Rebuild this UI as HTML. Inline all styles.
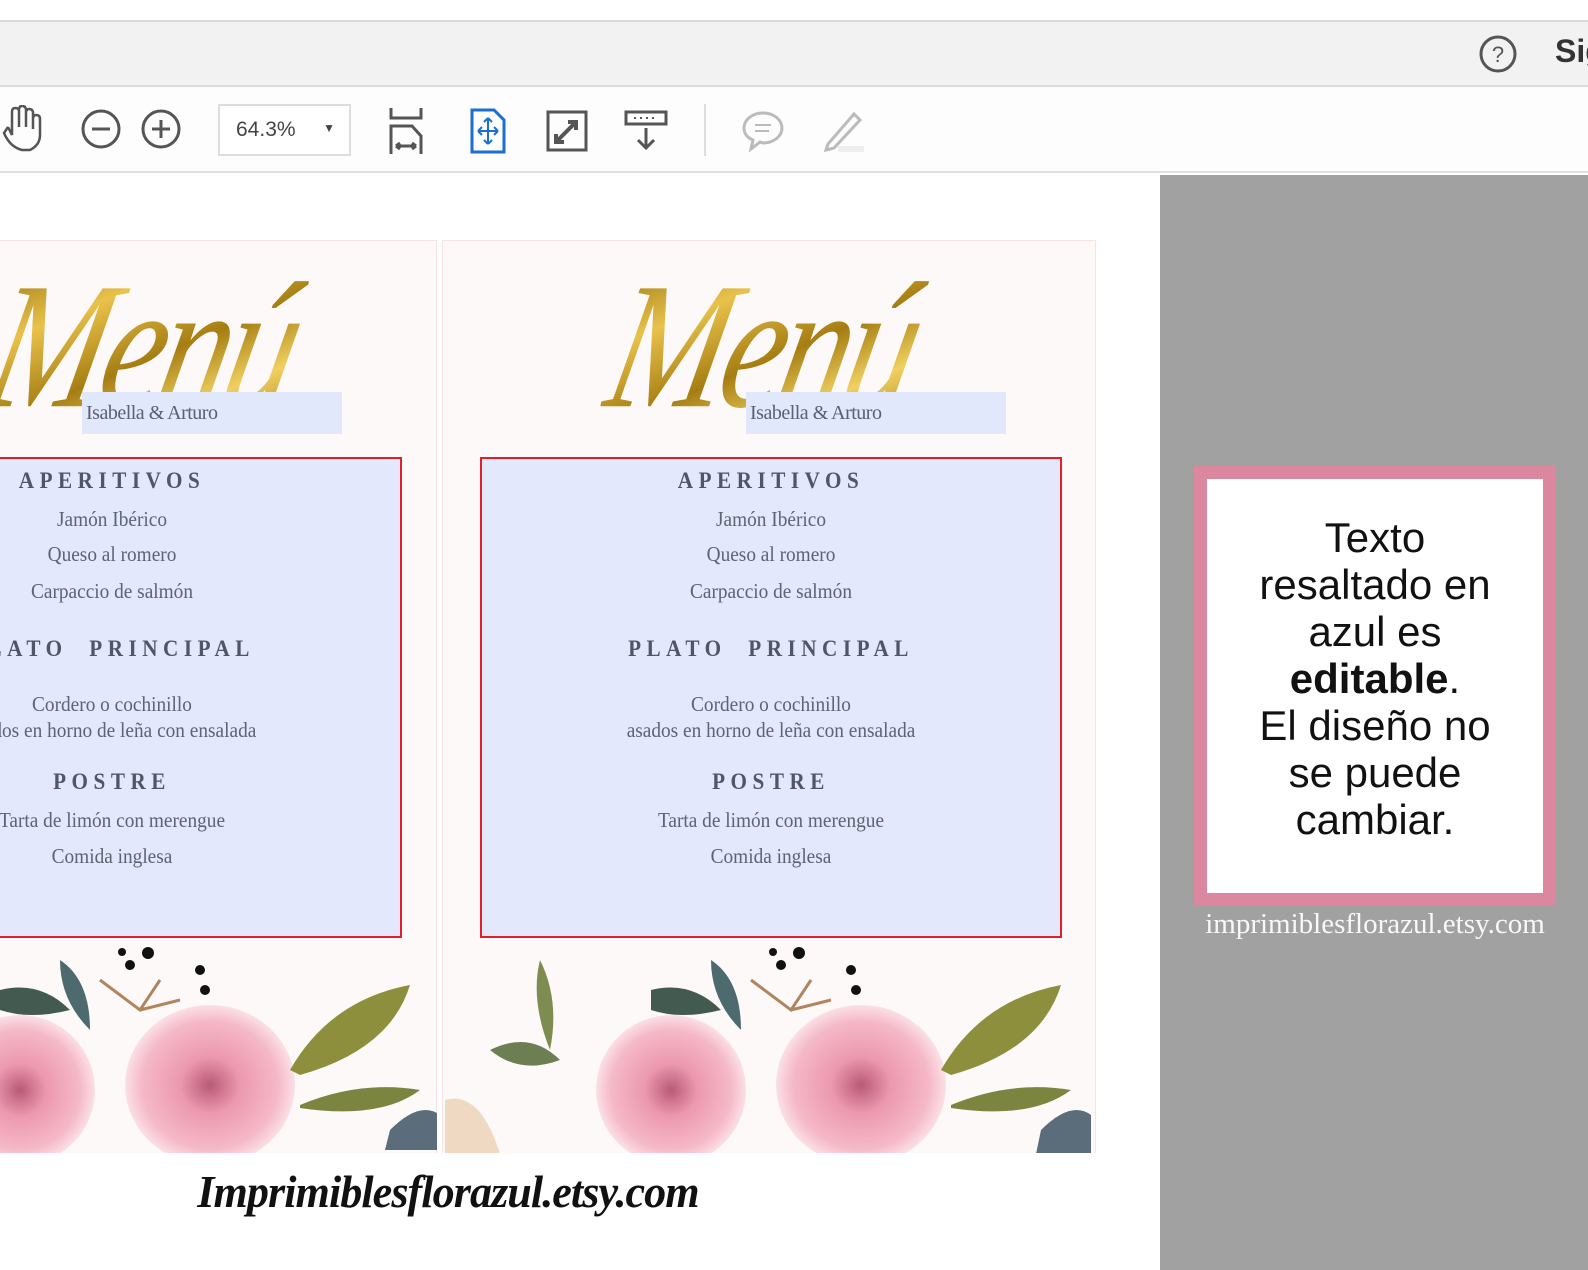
<!DOCTYPE html>
<html><head><meta charset="utf-8"><style>
*{margin:0;padding:0;box-sizing:border-box}
body{width:1588px;height:1270px;overflow:hidden;background:#fff;position:relative;font-family:"Liberation Sans",sans-serif}
.abs{position:absolute}
.page{position:absolute;top:240px;height:914px;background:#fdf9f9;border:1px solid #f7e3e6;overflow:hidden}
.menu{position:absolute;font-family:"Liberation Serif",serif;font-style:italic;font-size:150px;color:#c99a1e;background:linear-gradient(160deg,#8a6508,#e8c24a 30%,#a57d12 55%,#f0d060 75%,#9a700c);-webkit-background-clip:text;background-clip:text;-webkit-text-fill-color:transparent;letter-spacing:-6px;transform:skewX(-12deg) scale(0.95,1.2);transform-origin:left top}
.names{position:absolute;top:392px;height:42px;width:260px;background:#e2e8fb;font-family:"Liberation Serif",serif;font-size:20px;color:#5b6070;padding:10px 4px 0;letter-spacing:-0.5px;z-index:2}
.box{position:absolute;top:457px;height:481px;border:2px solid #e0202a;background:#e3e8fc}
.t{position:absolute;font-family:"Liberation Serif",serif;color:#5c6474;text-align:center;width:600px;white-space:nowrap;transform:scaleX(0.92)}
.h{font-weight:bold;font-size:23px;letter-spacing:6px;color:#4f5666}
.i{font-size:21px}
</style></head><body>
<div class="abs" style="left:0;top:0;width:1588px;height:20px;background:#fff"></div>
<div class="abs" style="left:0;top:20px;width:1588px;height:67px;background:#f2f2f2;border-top:2px solid #dcdcdc;border-bottom:2px solid #dcdcdc"></div>
<svg class="abs" style="left:1478px;top:34px" width="40" height="40" viewBox="0 0 40 40"><circle cx="20" cy="20" r="17" fill="none" stroke="#555" stroke-width="3"/><text x="20" y="28" text-anchor="middle" font-size="22" font-family="Liberation Sans" fill="#555">?</text></svg>
<div class="abs" style="left:1555px;top:33px;font-size:32px;color:#333;font-weight:bold">Sig</div>
<div class="abs" style="left:0;top:87px;width:1588px;height:86px;background:#fdfdfd;border-bottom:2px solid #e0e0e0"></div>
<svg class="abs" style="left:0;top:105px" width="50" height="50" viewBox="0 0 50 50" fill="none" stroke="#555" stroke-width="2.5"><path d="M8 22 L4 28 Q10 42 22 45 L30 45 Q40 40 40 30 L40 14 Q40 10 36 10 Q33 10 33 14 L33 24 M33 14 L33 8 Q33 4 29 4 Q26 4 26 8 L26 22 M26 8 L26 5 Q26 1 22 1 Q19 1 19 5 L19 22 M19 6 Q19 3 15 3 Q12 3 12 7 L12 30 L8 22"/></svg>
<svg class="abs" style="left:80px;top:108px" width="42" height="42"><circle cx="21" cy="21" r="18" fill="none" stroke="#555" stroke-width="3"/><path d="M12 21H30" stroke="#555" stroke-width="3"/></svg>
<svg class="abs" style="left:140px;top:108px" width="42" height="42"><circle cx="21" cy="21" r="18" fill="none" stroke="#555" stroke-width="3"/><path d="M12 21H30M21 12V30" stroke="#555" stroke-width="3"/></svg>
<div class="abs" style="left:218px;top:104px;width:133px;height:52px;border:2px solid #ddd;background:#fff;font-size:21px;color:#444;padding:12px 16px">64.3%<span style="position:absolute;right:14px;top:15px;font-size:12px">▼</span></div>
<svg class="abs" style="left:388px;top:106px" width="40" height="50" fill="none" stroke="#555" stroke-width="3"><path d="M3 2V12H33V2M3 48V20H24L33 30V48M8 40H28M8 40l4-3M8 40l4 3M28 40l-4-3M28 40l-4 3"/></svg>
<svg class="abs" style="left:470px;top:108px" width="36" height="46" fill="none" stroke="#1a6fd0" stroke-width="3"><path d="M2 2H24L34 12V44H2Z"/><path d="M18 10V36M8 23H28M18 10l-4 4M18 10l4 4M18 36l-4-4M18 36l4-4M8 23l4-4M8 23l4 4M28 23l-4-4M28 23l-4 4" stroke-width="2"/></svg>
<svg class="abs" style="left:546px;top:110px" width="42" height="42" fill="none" stroke="#555" stroke-width="3"><rect x="2" y="2" width="38" height="38"/><path d="M10 32L30 12M22 12H30V20M10 24V32H18" stroke-width="4"/></svg>
<svg class="abs" style="left:624px;top:110px" width="44" height="42" fill="none" stroke="#555" stroke-width="3"><rect x="2" y="2" width="40" height="12"/><path d="M22 18V38M14 30l8 8 8-8"/><path d="M10 8h2M16 8h2M22 8h2M28 8h2" stroke-width="2"/></svg>
<div class="abs" style="left:704px;top:104px;width:2px;height:52px;background:#ddd"></div>
<svg class="abs" style="left:741px;top:110px" width="44" height="42" fill="none" stroke="#bbb" stroke-width="3"><path d="M22 3C11 3 3 10 3 18C3 24 7 28 12 30L10 39L19 32C20 32 21 33 22 33C33 33 41 26 41 18C41 10 33 3 22 3Z"/><path d="M14 15H30M14 21H28" stroke-width="2"/></svg>
<svg class="abs" style="left:820px;top:108px" width="46" height="46" fill="none" stroke="#bbb" stroke-width="3"><path d="M8 36L34 6L40 12L14 40L6 42Z"/><rect x="18" y="38" width="26" height="6" fill="#eee" stroke="none"/></svg>
<div class="abs" style="left:1160px;top:175px;width:428px;height:1095px;background:#a1a1a1"></div>
<div class="abs" style="left:1194px;top:466px;width:362px;height:440px;background:#db87a0;padding:13px"><div style="background:#fff;width:100%;height:100%"></div></div>
<div class="abs" style="left:1194px;top:514px;width:362px;text-align:center;font-size:42px;line-height:47px;color:#111">Texto<br>resaltado en<br>azul es<br><b>editable</b>.<br>El diseño no<br>se puede<br>cambiar.</div>
<div class="abs" style="left:1180px;top:908px;width:390px;text-align:center;font-family:'Liberation Serif',serif;font-size:29px;color:#f8f8f8">imprimiblesflorazul.etsy.com</div>
<div class="page" style="left:-220px;width:657px"></div>
<div class="page" style="left:442px;width:654px"></div>
<div class="menu" style="left:15px;top:243px">Menú</div>
<div class="menu" style="left:635px;top:243px">Menú</div>
<div class="names" style="left:82px">Isabella &amp; Arturo</div>
<div class="names" style="left:746px">Isabella &amp; Arturo</div>
<div class="box" style="left:-10px;width:412px"></div>
<div class="box" style="left:480px;width:582px"></div>
<div class="t h" style="left:-188px;top:468px">APERITIVOS</div>
<div class="t i" style="left:-188px;top:507px">Jamón Ibérico</div>
<div class="t i" style="left:-188px;top:542px">Queso al romero</div>
<div class="t i" style="left:-188px;top:579px">Carpaccio de salmón</div>
<div class="t h" style="left:-188px;top:636px">PLATO&nbsp; PRINCIPAL</div>
<div class="t i" style="left:-188px;top:692px">Cordero o cochinillo</div>
<div class="t i" style="left:-188px;top:718px">asados en horno de leña con ensalada</div>
<div class="t h" style="left:-188px;top:769px">POSTRE</div>
<div class="t i" style="left:-188px;top:808px">Tarta de limón con merengue</div>
<div class="t i" style="left:-188px;top:844px">Comida inglesa</div>
<div class="t h" style="left:471px;top:468px">APERITIVOS</div>
<div class="t i" style="left:471px;top:507px">Jamón Ibérico</div>
<div class="t i" style="left:471px;top:542px">Queso al romero</div>
<div class="t i" style="left:471px;top:579px">Carpaccio de salmón</div>
<div class="t h" style="left:471px;top:636px">PLATO&nbsp; PRINCIPAL</div>
<div class="t i" style="left:471px;top:692px">Cordero o cochinillo</div>
<div class="t i" style="left:471px;top:718px">asados en horno de leña con ensalada</div>
<div class="t h" style="left:471px;top:769px">POSTRE</div>
<div class="t i" style="left:471px;top:808px">Tarta de limón con merengue</div>
<div class="t i" style="left:471px;top:844px">Comida inglesa</div>
<svg class="abs" style="left:0;top:940px" width="1160" height="214">
<defs><radialGradient id="r"><stop offset="0" stop-color="#b85a78"/><stop offset=".35" stop-color="#ec98ae"/><stop offset=".8" stop-color="#f5b9c8"/><stop offset="1" stop-color="#fbe0e6"/></radialGradient></defs>
<g>
<ellipse cx="210" cy="145" rx="85" ry="80" fill="url(#r)"/>
<ellipse cx="20" cy="150" rx="75" ry="75" fill="url(#r)"/>
<path d="M290 130 Q330 60 410 45 Q390 110 300 135Z" fill="#8d8f3c"/>
<path d="M300 165 Q360 140 420 150 Q380 180 300 168Z" fill="#7b8540"/>
<path d="M390 190 Q420 160 440 175 L440 210 L385 210Z" fill="#5b6c7a"/>
<path d="M0 50 Q40 40 70 70 Q30 80 0 70Z" fill="#435a50"/>
<path d="M60 20 Q90 40 90 90 Q60 60 60 20Z" fill="#4d6a6e"/>
<circle cx="130" cy="25" r="5" fill="#111"/><circle cx="148" cy="13" r="6" fill="#111"/><circle cx="200" cy="30" r="5" fill="#111"/><circle cx="205" cy="50" r="5" fill="#111"/><circle cx="122" cy="12" r="4" fill="#111"/>
<path d="M100 40 L140 70 L160 40 M140 70 L180 60" stroke="#b08560" stroke-width="3" fill="none"/>
</g>
<g transform="translate(651,0)">
<ellipse cx="210" cy="145" rx="85" ry="80" fill="url(#r)"/>
<ellipse cx="20" cy="150" rx="75" ry="75" fill="url(#r)"/>
<path d="M290 130 Q330 60 410 45 Q390 110 300 135Z" fill="#8d8f3c"/>
<path d="M300 165 Q360 140 420 150 Q380 180 300 168Z" fill="#7b8540"/>
<path d="M390 190 Q420 160 440 175 L440 214 L385 214Z" fill="#5b6c7a"/>
<path d="M0 50 Q40 40 70 70 Q30 80 0 70Z" fill="#435a50"/>
<path d="M60 20 Q90 40 90 90 Q60 60 60 20Z" fill="#4d6a6e"/>
<circle cx="130" cy="25" r="5" fill="#111"/><circle cx="148" cy="13" r="6" fill="#111"/><circle cx="200" cy="30" r="5" fill="#111"/><circle cx="205" cy="50" r="5" fill="#111"/><circle cx="122" cy="12" r="4" fill="#111"/>
<path d="M100 40 L140 70 L160 40 M140 70 L180 60" stroke="#b08560" stroke-width="3" fill="none"/>
</g>
<path d="M490 110 Q530 90 560 120 Q520 135 490 110Z" fill="#6c7f52"/>
<path d="M540 20 Q560 60 550 110 Q530 60 540 20Z" fill="#7e8c50"/>
<path d="M445 160 Q480 150 500 214 L445 214Z" fill="#f0d9c2"/>
<rect x="437" y="0" width="5" height="214" fill="#fff"/>
<rect x="0" y="213" width="1160" height="2" fill="#fff"/>
</svg>
<div class="abs" style="left:148px;top:1165px;width:600px;text-align:center;font-family:'Liberation Serif',serif;font-style:italic;font-weight:bold;font-size:46px;color:#111;letter-spacing:-1px;transform:scaleX(0.96)">Imprimiblesflorazul.etsy.com</div>
</body></html>
